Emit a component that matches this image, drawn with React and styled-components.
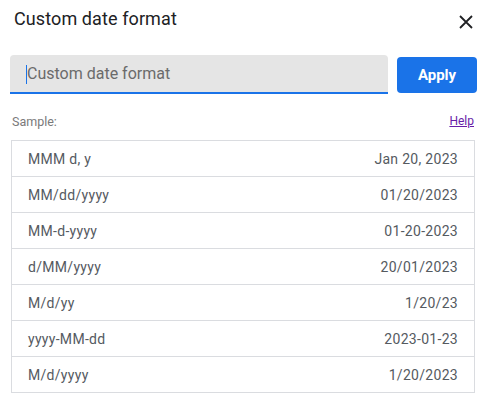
import React from 'react';
import styled, {createGlobalStyle} from 'styled-components';

const GlobalStyle = createGlobalStyle`
    body {
        margin: 0;
        background: #ffffff;
        font-family: Roboto, "Liberation Sans", Arial, sans-serif;
    }
`;

const Dialog = styled.div`
    width: 487px;
    height: 409px;
    box-sizing: border-box;
    padding: 7px 10px 0 10px;
`;

const Header = styled.div`
    display: flex;
    align-items: flex-start;
    justify-content: space-between;
    height: 48px;
`;

const Title = styled.h1`
    margin: 0 0 0 4px;
    font-size: 18px;
    line-height: 24px;
    font-weight: 400;
    color: #202124;
    letter-spacing: 0.1px;
`;

const CloseButton = styled.button`
    border: none;
    background: none;
    padding: 0;
    margin: 7px 3px 0 0;
    width: 16px;
    height: 16px;
    display: flex;
    align-items: center;
    justify-content: center;
    cursor: pointer;
`;

const InputRow = styled.div`
    display: flex;
    align-items: center;
    gap: 9px;
`;

const Field = styled.div`
    position: relative;
    flex: 1;
    height: 37px;
    background: #e5e5e5;
    border-radius: 4px 4px 0 0;
    border-bottom: 2px solid #1a73e8;
    display: flex;
    align-items: center;
`;

const Caret = styled.span`
    position: absolute;
    left: 16px;
    top: 10px;
    width: 1px;
    height: 19px;
    background: #1a73e8;
`;

const TextInput = styled.input`
    flex: 1;
    border: none;
    background: transparent;
    outline: none;
    padding: 0 0 0 17px;
    font-family: Roboto, "Liberation Sans", Arial, sans-serif;
    font-size: 16px;
    color: #202124;
    &::placeholder {
        color: #6b6b6b;
    }
`;

const ApplyButton = styled.button`
    width: 80px;
    height: 36px;
    border: none;
    border-radius: 4px;
    background: #1a73e8;
    color: #ffffff;
    font-family: Roboto, "Liberation Sans", Arial, sans-serif;
    font-size: 15px;
    font-weight: 700;
    cursor: pointer;
`;

const SampleBar = styled.div`
    display: flex;
    justify-content: space-between;
    align-items: center;
    margin: 17px 3px 0 2px;
    height: 20px;
    font-size: 12.5px;
`;

const SampleLabel = styled.span`
    color: #7a7a7a;
`;

const HelpLink = styled.a`
    color: #681da8;
    text-decoration: underline;
    font-size: 12px;
    cursor: pointer;
`;

const Table = styled.div`
    margin: 9px 2px 0 1px;
    border: 1px solid #dadce0;
    border-bottom: none;
`;

const Row = styled.div`
    display: flex;
    justify-content: space-between;
    align-items: center;
    height: 35px;
    padding: 0 16px;
    border-bottom: 1px solid #dadce0;
    font-size: 14px;
    letter-spacing: 0.3px;
    color: #555a5f;
    cursor: pointer;
`;

const formats = [
    ['MMM d, y', 'Jan 20, 2023'],
    ['MM/dd/yyyy', '01/20/2023'],
    ['MM-d-yyyy', '01-20-2023'],
    ['d/MM/yyyy', '20/01/2023'],
    ['M/d/yy', '1/20/23'],
    ['yyyy-MM-dd', '2023-01-23'],
    ['M/d/yyyy', '1/20/2023'],
];

export default function App() {
    return (
        <Dialog>
            <GlobalStyle />
            <Header>
                <Title>Custom date format</Title>
                <CloseButton aria-label="Close">
                    <svg width="14" height="14" viewBox="0 0 14 14">
                        <path d="M1 1 L13 13 M13 1 L1 13" stroke="#202124" strokeWidth="1.8" fill="none" />
                    </svg>
                </CloseButton>
            </Header>
            <InputRow>
                <Field>
                    <Caret />
                    <TextInput placeholder="Custom date format" />
                </Field>
                <ApplyButton>Apply</ApplyButton>
            </InputRow>
            <SampleBar>
                <SampleLabel>Sample:</SampleLabel>
                <HelpLink>Help</HelpLink>
            </SampleBar>
            <Table>
                {formats.map(([pattern, sample]) => (
                    <Row key={pattern}>
                        <span>{pattern}</span>
                        <span>{sample}</span>
                    </Row>
                ))}
            </Table>
        </Dialog>
    );
}
